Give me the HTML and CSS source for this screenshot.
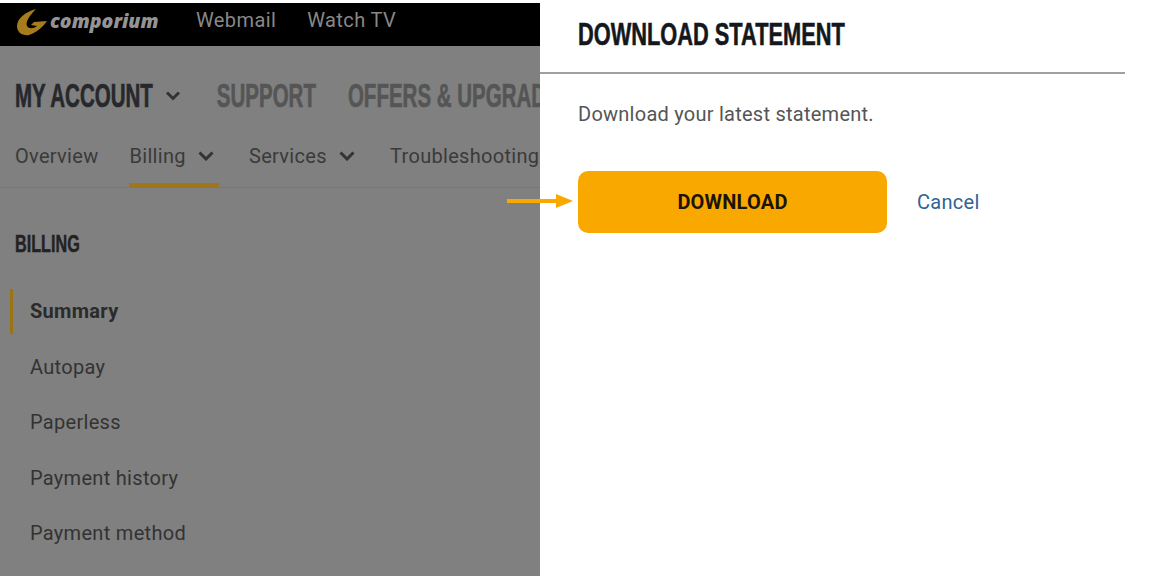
FILE: index.html
```html
<!DOCTYPE html>
<html>
<head>
    <title>Download Statement</title>
    <link rel="stylesheet" href="styles.css">
</head>
<body>
    <div class="page">
        <div class="behind">
            <div class="topbar">
                <div class="logo">
                    <svg class="logo-mark" width="32" height="28" viewBox="0 0 32 28">
                        <path d="M20 0 C9 3 1 10 1 17 C1 24 7 27 13 26 C20 24 27 18 31 12 L18 13 L15 16 L21 17 C17 20 13 20 11 17 C9 13 14 6 20 0 Z"/>
                    </svg>
                    <span class="logo-text">comporium</span>
                </div>
                <a class="top-link">Webmail</a>
                <a class="top-link">Watch TV</a>
            </div>
            <div class="mainnav">
                <span class="big dark">MY ACCOUNT</span>
                <svg class="chev chev-main" width="16" height="10" viewBox="0 0 16 10"><path d="M2 1.5 L8 7.5 L14 1.5"/></svg>
                <span class="big">SUPPORT</span>
                <span class="big">OFFERS &amp; UPGRADES</span>
            </div>
            <div class="subnav">
                <div class="tab">Overview</div>
                <div class="tab has-menu active">Billing
                    <svg class="chev" width="16" height="10" viewBox="0 0 16 10"><path d="M1.5 1.5 L8 8 L14.5 1.5"/></svg>
                </div>
                <div class="tab has-menu">Services
                    <svg class="chev" width="16" height="10" viewBox="0 0 16 10"><path d="M1.5 1.5 L8 8 L14.5 1.5"/></svg>
                </div>
                <div class="tab">Troubleshooting</div>
            </div>
            <div class="side">
                <h2 class="side-title"><span>BILLING</span></h2>
                <div class="side-item current">Summary</div>
                <div class="side-item">Autopay</div>
                <div class="side-item">Paperless</div>
                <div class="side-item">Payment history</div>
                <div class="side-item">Payment method</div>
            </div>
        </div>
        <div class="panel">
            <div class="panel-head">
                <h1 class="panel-title"><span>DOWNLOAD STATEMENT</span></h1>
            </div>
            <p class="panel-text">Download your latest statement.</p>
            <div class="actions">
                <button class="download">DOWNLOAD</button>
                <a class="cancel">Cancel</a>
            </div>
        </div>
        <svg class="arrow" width="68" height="16" viewBox="0 0 68 16">
            <path d="M0 6 H49 V1 L66 8 L49 15 V10 H0 Z"/>
        </svg>
    </div>
</body>
</html>
```

FILE: styles.css
```css
html, body {
  margin: 0;
  padding: 0;
  background: #fff;
}

body {
  font-family: Roboto, Arial, sans-serif;
  height: 576px;
  overflow: hidden;
}

.page {
  position: relative;
  display: flex;
  height: 576px;
}

.behind {
  width: 540px;
  flex: none;
  background: #808080;
  overflow: hidden;
  border-top: 3px solid #fff;
  box-sizing: border-box;
}

.topbar {
  display: flex;
  align-items: center;
  height: 43px;
  background: #000;
  padding-left: 16px;
  padding-bottom: 9px;
  box-sizing: border-box;
}

.logo {
  display: flex;
  align-items: center;
  width: 180px;
  flex: none;
}

.logo-mark {
  fill: #a67c1c;
  flex: none;
  margin-top: 5px;
}

.logo-text {
  font-family: "Open Sans", sans-serif;
  font-style: italic;
  font-weight: 800;
  font-size: 19.5px;
  color: #949494;
  margin-left: 2px;
}

.top-link {
  font-size: 20px;
  letter-spacing: 0.4px;
  color: #888;
  margin-right: 31px;
}

.mainnav {
  display: flex;
  align-items: center;
  height: 50px;
  margin-top: 25px;
  padding-left: 15px;
  white-space: nowrap;
  box-sizing: border-box;
}

.big {
  display: inline-block;
  flex: none;
  font-family: "Liberation Sans", sans-serif;
  font-weight: 700;
  font-size: 20.5px;
  line-height: 1;
  color: #555;
  -webkit-text-stroke: 0.4px;
  transform: scaleY(1.6);
  margin-right: 32px;
}

.big.dark {
  color: #26282c;
  margin-right: 12px;
}

.chev {
  fill: none;
  stroke: #333;
  stroke-width: 3;
  vertical-align: 2px;
}

.chev-main {
  flex: none;
  margin-right: 36px;
}

.subnav {
  display: flex;
  height: 66px;
  padding-left: 15px;
  border-bottom: 1px solid #777;
  white-space: nowrap;
}

.tab {
  font-size: 20px;
  letter-spacing: 0.3px;
  line-height: 70px;
  color: #3a3a3a;
  margin-right: 31px;
  height: 66px;
  box-sizing: border-box;
}

.tab .chev {
  margin-left: 7px;
}

.tab.has-menu {
  padding-right: 5px;
  margin-right: 30px;
}

.tab.active {
  border-bottom: 4px solid #a0761a;
}

.side {
  padding-top: 43px;
}

.side-title {
  margin: 0 0 34px 15px;
  font-family: "Liberation Sans", sans-serif;
  font-weight: 700;
  font-size: 16.2px;
  line-height: 24px;
  color: #222;
  -webkit-text-stroke: 0.3px;
}

.side-title span {
  display: inline-block;
  line-height: 1;
  transform: scaleY(1.45);
}

.side-item {
  font-size: 20px;
  letter-spacing: 0.3px;
  line-height: 45px;
  height: 45px;
  margin-bottom: 10.5px;
  margin-left: 10px;
  padding-left: 20px;
  color: #333;
}

.side-item.current {
  font-weight: 700;
  color: #2b2b2b;
  border-left: 3px solid #9c7414;
  padding-left: 17px;
}

.panel {
  width: 585px;
  flex: none;
  background: #fff;
}

.panel-head {
  height: 74px;
  box-sizing: border-box;
  border-bottom: 2px solid #a0a0a0;
  padding: 18px 0 0 38px;
}

.panel-title {
  margin: 0;
  font-family: "Liberation Sans", sans-serif;
  font-weight: 700;
  font-size: 21.8px;
  line-height: 34px;
  color: #14171c;
  -webkit-text-stroke: 0.4px;
}

.panel-title span {
  display: inline-block;
  line-height: 1;
  transform: scaleY(1.46);
}

.panel-text {
  margin: 27px 0 0 38px;
  font-size: 20px;
  line-height: 26px;
  letter-spacing: 0.25px;
  color: #555;
}

.actions {
  display: flex;
  align-items: center;
  margin: 44px 0 0 38px;
}

.download {
  width: 309px;
  height: 62px;
  padding: 0;
  background: #f9a800;
  border: none;
  border-radius: 10px;
  font-family: Roboto, Arial, sans-serif;
  font-weight: 700;
  font-size: 20px;
  letter-spacing: 0.2px;
  color: #1c1408;
  cursor: pointer;
}

.cancel {
  margin-left: 30px;
  font-size: 20px;
  letter-spacing: 0.3px;
  color: #2f6496;
}

.arrow {
  position: absolute;
  left: 507px;
  top: 193px;
  fill: #f9a800;
}
```
